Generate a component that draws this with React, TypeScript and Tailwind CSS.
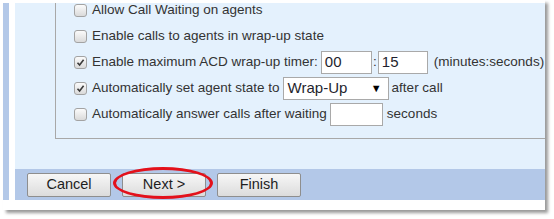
import React from 'react';

const font = { fontFamily: '"Liberation Sans", Arial, sans-serif' };

const Check: React.FC<{ checked?: boolean }> = ({ checked }) => (
  <span className="w-[13px] h-[13px] mr-[5px] shrink-0 rounded-[3px] border border-[#a3a3a3] bg-gradient-to-b from-[#fbfbfb] to-[#dadada] flex items-center justify-center">
    {checked && (
      <svg width="9" height="9" viewBox="0 0 9 9">
        <path d="M1.5 4.8 L3.6 7 L7.6 1.8" fill="none" stroke="#3a3a3a" strokeWidth="1.6" />
      </svg>
    )}
  </span>
);

const Field: React.FC<{ value?: string; w: string }> = ({ value, w }) => (
  <span className={`${w} h-[23px] bg-white border border-[#a9a9a9] flex items-center pl-[3px] text-[15px] text-[#1f1f2e]`}>
    {value}
  </span>
);

const Btn: React.FC<{ label: string }> = ({ label }) => (
  <button className="w-[84px] h-[24px] rounded-[2px] border border-[#8e8e8e] bg-gradient-to-b from-[#f7f7f7] to-[#dcdcdc] text-[14.5px] text-[#1e1e1e] flex items-center justify-center">
    {label}
  </button>
);

export default function App() {
  return (
    <div className="w-[554px] h-[219px] bg-white overflow-hidden relative pl-[3px]" style={font}>
      <div className="w-[542px] h-[210px] bg-white flex pt-[3px] pb-[10px] shadow-[3px_3px_3px_rgba(0,0,0,0.4)]">
        <div className="w-[6px] bg-[#b3c8e8]" />
        <div className="ml-[6px] w-[530px] flex flex-col">
          <div className="flex-1 bg-[#e4f1fd] pl-[40px] overflow-hidden">
            <div className="-mt-[6px] border-l border-b border-[#a8a8a8] pl-[18px] pb-[11px] text-[13.5px] text-[#333] whitespace-nowrap">
              <div className="h-[26px] flex items-center">
                <Check />
                <span>Allow Call Waiting on agents</span>
              </div>
              <div className="h-[26px] flex items-center">
                <Check />
                <span>Enable calls to agents in wrap-up state</span>
              </div>
              <div className="h-[26px] flex items-center">
                <Check checked />
                <span>Enable maximum ACD wrap-up timer:</span>
                <span className="ml-[3px]"><Field value="00" w="w-[51px]" /></span>
                <span className="w-[6px] text-center">:</span>
                <Field value="15" w="w-[50px]" />
                <span className="ml-[6px]">(minutes:seconds)</span>
              </div>
              <div className="h-[26px] flex items-center">
                <Check checked />
                <span>Automatically set agent state to</span>
                <span className="ml-[3px] w-[106px] h-[23px] bg-white border border-[#a9a9a9] flex items-center justify-between pl-[4px] pr-[6px] text-[15px] text-[#1f1f2e]">
                  <span>Wrap-Up</span>
                  <span className="text-[11px] text-black">▼</span>
                </span>
                <span className="ml-[3px]">after call</span>
              </div>
              <div className="h-[26px] flex items-center">
                <Check />
                <span>Automatically answer calls after waiting</span>
                <span className="ml-[3px]"><Field w="w-[53px]" /></span>
                <span className="ml-[4px]">seconds</span>
              </div>
            </div>
          </div>
          <div className="h-[31px] bg-[#b3c8e8] flex items-center gap-[11px] pl-[12px]">
            <Btn label="Cancel" />
            <Btn label="Next >" />
            <Btn label="Finish" />
          </div>
        </div>
      </div>
      <div className="absolute left-[113px] top-[167px] w-[100px] h-[32px] rounded-[50%] border-[3px] border-[#e3111b]" />
    </div>
  );
}
